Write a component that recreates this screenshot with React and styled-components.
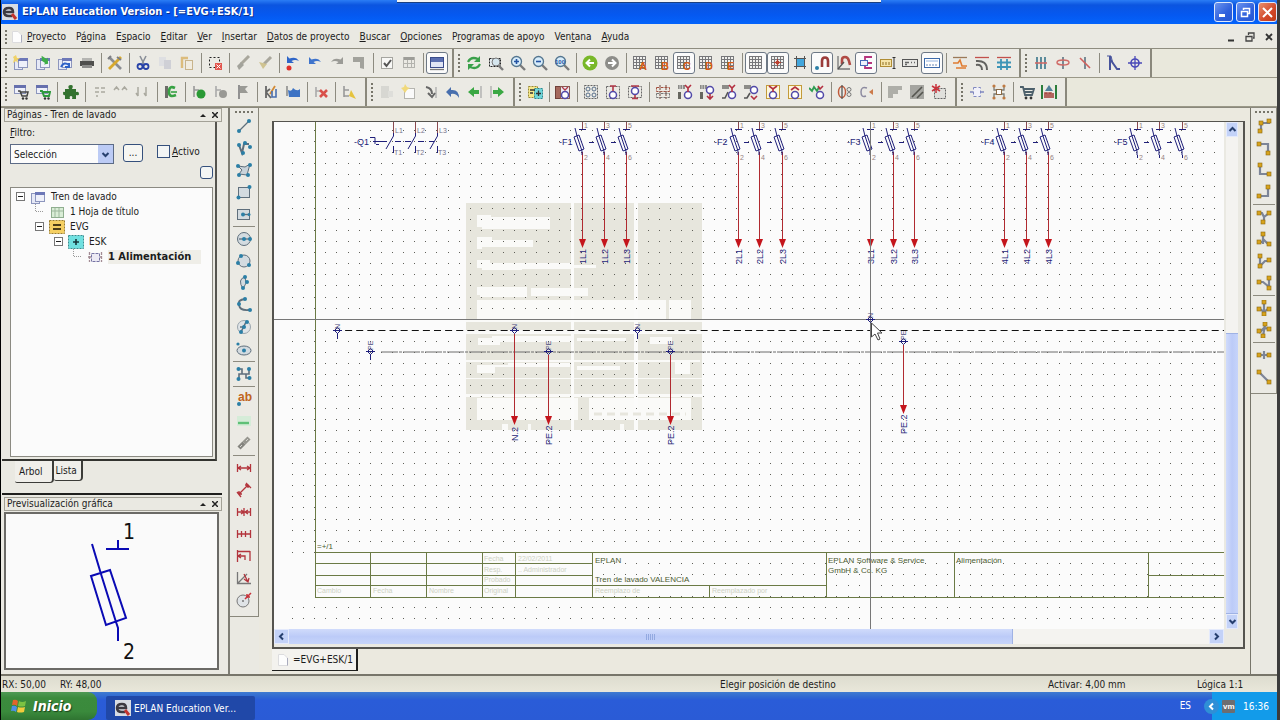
import React from "react";
import styled, { createGlobalStyle, css } from "styled-components";

const GlobalStyle = createGlobalStyle`
  * { box-sizing: border-box; }
  body {
    margin: 0;
    background: #eae9e2;
    font-family: "DejaVu Sans Condensed", "Noto Sans", sans-serif;
    font-size: 10px;
    color: #1c1c1c;
  }
  button, select, input { font: inherit; color: inherit; margin: 0; padding: 0; }
`;

/* ---------- frame ---------- */

const Desktop = styled.div`
  min-height: 100vh;
  display: flex;
  flex-direction: column;
  background: #eae9e2;
  border-left: 1px solid #000;
  border-right: 3px solid #3c3c3c;
  position: relative;
`;

const TopStrip = styled.div`
  position: absolute;
  top: 0;
  left: 31%;
  width: 38%;
  height: 3px;
  background: #f4f4f4;
  border-bottom: 1px solid #1b3f80;
`;

const TitleBar = styled.header`
  height: 24px;
  display: flex;
  align-items: center;
  gap: 4px;
  padding-left: 1px;
  background: linear-gradient(#2b7df5 0, #0b55e0 5px, #0558f0 60%, #0463fb 100%);
  color: #fff;
`;

const TitleText = styled.h1`
  flex: 1;
  margin: 0;
  font-family: "DejaVu Sans Condensed", sans-serif;
  font-size: 11px;
  font-weight: bold;
  line-height: 26px;
  text-shadow: 1px 1px 0 #0a2f8c;
`;

const WindowButtons = styled.div`
  display: flex;
  gap: 3px;
`;

const WindowButton = styled.button`
  width: 19px;
  height: 20px;
  border: 1px solid #dfe9fb;
  border-radius: 3px;
  display: grid;
  place-items: center;
  background: ${(p) => (p.$close ? "linear-gradient(135deg,#e78f6d,#d2482a 60%,#c23c18)" : "linear-gradient(135deg,#6b93ee,#2f60dc 60%,#2757d2)")};
`;

const MenuBar = styled.nav`
  height: 25px;
  display: flex;
  align-items: center;
  padding: 2px 0 0 4px;
  background: #eae9e2;
  border-bottom: 1px solid #8f8d80;
`;

const MenuLead = styled.span`
  display: flex;
  align-items: center;
  gap: 2px;
`;

const MenuItem = styled.button`
  padding: 0 5px;
  border: 0;
  background: none;
  line-height: 16px;
  white-space: nowrap;
`;

const MdiButtons = styled.div`
  margin-left: auto;
  display: flex;
  gap: 3px;
`;

const MdiButton = styled.button`
  width: 16px;
  height: 16px;
  border: 0;
  background: none;
  display: grid;
  place-items: center;
`;

/* ---------- toolbars ---------- */

const ToolRow = styled.div`
  height: 29px;
  display: flex;
  background: #e9e8dc;
  border-bottom: 1px solid #9a9888;
`;

const ToolGroup = styled.div`
  display: flex;
  align-items: center;
  padding: 0 ${(p) => p.$end}px 0 4px;
  background: #ebeae4;
  border-right: 2px solid #8a887c;
`;

const Grip = styled.span`
  flex: none;
  background-image: radial-gradient(circle at 1px 1px, #77756a 1px, transparent 1px);
  background-size: 4px 4px;
  ${(p) => (p.$across ? css`width: 18px; height: 4px; margin: 3px 0 0;` : css`width: 4px; height: ${p.$short ? 14 : 18}px; margin-right: 1px;`)}
`;

const ToolButton = styled.button`
  width: 22px;
  height: 22px;
  flex: none;
  display: grid;
  place-items: center;
  border: 1px solid ${(p) => (p.$on ? "#6d7885" : "transparent")};
  border-radius: 3px;
  background: ${(p) => (p.$on ? "#fbfbfb" : "none")};
`;

const Divider = styled.span`
  flex: none;
  background: #8d8b80;
  ${(p) => (p.$across ? css`width: 22px; height: 1px; margin: 1px 0;` : css`width: 1px; height: 20px; margin: 0 2px 0 3px;`)}
`;

const Rail = styled.div`
  flex: none;
  align-self: flex-start;
  width: ${(p) => p.$w}px;
  padding-bottom: 5px;
  display: flex;
  flex-direction: column;
  align-items: center;
  background: #ebeae4;
  border: solid #8a887c;
  border-width: 0 1px 1px 0;
`;

/* ---------- body ---------- */

const Body = styled.main`
  flex: 1;
  display: flex;
  border-top: 1px solid #8a887c;
  border-bottom: 2px solid #77756a;
`;

const SidePanel = styled.aside`
  flex: none;
  width: 229px;
  padding: 0 6px 4px 1px;
  display: flex;
  flex-direction: column;
  border-right: 2px solid #7e7d74;
`;

const PanelTitle = styled.h2`
  margin: 0 0 0 2px;
  height: 14px;
  padding: 0 3px 0 2px;
  display: flex;
  align-items: center;
  gap: 6px;
  border: 1px solid #a3a197;
  font-size: 10px;
  font-weight: normal;
  line-height: 12px;
`;

const PanelTitleText = styled.span`
  flex: 1;
`;

const PagesPanel = styled.section`
  flex: 1;
  display: flex;
  flex-direction: column;
  margin-right: 5px;
  padding: 4px 2px 2px 8px;
  border-right: 2px solid #55544f;
  border-bottom: 2px solid #33332f;
`;

const FieldLabel = styled.label`
  line-height: 14px;
`;

const FilterRow = styled.div`
  display: flex;
  align-items: flex-start;
  gap: 9px;
  margin-top: 4px;
`;

const SelectBox = styled.span`
  position: relative;
  width: 104px;
  height: 20px;
`;

const Select = styled.select`
  appearance: none;
  width: 100%;
  height: 100%;
  padding-left: 3px;
  border: 1px solid #5c6b86;
  border-radius: 0;
  background: #fcfcfc;
`;

const SelectArrow = styled.span`
  position: absolute;
  top: 1px;
  right: 1px;
  width: 15px;
  height: 18px;
  display: grid;
  place-items: center;
  background: #bccbf5;
  pointer-events: none;
`;

const DotsButton = styled.button`
  width: 20px;
  height: 18px;
  border: 1px solid #35507c;
  border-radius: 3px;
  background: #f6f6f2;
  line-height: 12px;
`;

const Check = styled.input`
  appearance: none;
  width: 13px;
  height: 13px;
  border: 1px solid #35507c;
  border-radius: ${(p) => (p.$round ? 3 : 0)}px;
  background: #f3f5f4;
`;

const CheckLabel = styled.label`
  display: flex;
  gap: 2px;
  margin: 1px 0 0 5px;
  line-height: 13px;
`;

const LoneCheck = styled.div`
  display: flex;
  justify-content: flex-end;
  margin: 2px 0 8px;
`;

const Tree = styled.ul`
  flex: 1;
  min-height: 120px;
  margin: 0;
  padding: 1px 0 0 5px;
  list-style: none;
  background: #fbfbfb;
  border: 1px solid #8b8a82;
`;

const TreeRow = styled.li`
  height: 15px;
  padding-left: ${(p) => p.$depth * 19}px;
  display: flex;
  align-items: center;
  gap: 5px;
`;

const TreeText = styled.span`
  padding-right: ${(p) => (p.$active ? 10 : 0)}px;
  font-size: ${(p) => (p.$active ? 11 : 10)}px;
  font-weight: ${(p) => (p.$active ? "bold" : "normal")};
  line-height: 14px;
  background: ${(p) => (p.$active ? "#efeee8" : "none")};
`;

const Tabs = styled.div`
  display: flex;
  align-items: flex-start;
  padding-left: 13px;
  margin-bottom: 10px;
`;

const Tab = styled.button`
  height: ${(p) => (p.$active ? 22 : 20)}px;
  padding: 0 ${(p) => (p.$active ? 9 : 4)}px 0 ${(p) => (p.$active ? 4 : 2)}px;
  border: solid #3c3c38;
  border-width: 0 2px 1px 0;
  border-radius: 0 0 4px 2px;
  background: #f0efea;
`;

const PreviewWrap = styled.section`
  border-top: 2px solid #1f1f1d;
  padding-top: 2px;
`;

const PreviewBox = styled.div`
  height: 158px;
  margin: 1px 3px 0 2px;
  border: 2px solid #6b6a66;
  background: #fafafa;
  display: flex;
  justify-content: center;
`;

/* ---------- editor ---------- */

const Editor = styled.section`
  flex: 1;
  min-width: 0;
  display: flex;
  flex-direction: column;
  padding: 13px 5px 2px 13px;
  background: #ebe9df;
  border-right: 1px solid #77756a;
`;

const Sheet = styled.div`
  flex: 1;
  min-height: 520px;
  display: grid;
  grid-template-columns: 1fr 14px;
  grid-template-rows: 1fr 15px;
  padding: 0 5px 3px 0;
  border: solid #55544f;
  border-width: 1px 2px 2px 2px;
  background: #eae9e2;
`;

const Drawing = styled.svg`
  display: block;
  width: 100%;
  height: 100%;
  min-height: 480px;
  background: #fbfbfb;
  font-family: "Liberation Sans", sans-serif;
`;

const ScrollBar = styled.div`
  display: flex;
  flex-direction: ${(p) => (p.$v ? "column" : "row")};
  ${(p) => (p.$v ? "margin-left: 2px;" : "")}
  background: #f4f3f0;
`;

const ScrollButton = styled.button`
  flex: none;
  width: ${(p) => (p.$v ? 12 : 15)}px;
  height: 15px;
  border: 1px solid #e4eafc;
  background: #c3d2f8;
  display: grid;
  place-items: center;
`;

const Thumb = styled.div`
  flex: ${(p) => p.$size};
  background: linear-gradient(${(p) => (p.$v ? "90deg" : "180deg")}, #d0dbfb, #bccbf8 50%, #c6d4fa);
  border: solid #9fb2e4;
  border-width: ${(p) => (p.$v ? "1px 0" : "0 1px 0 0")};
  display: grid;
  place-items: center;
`;

const Track = styled.div`
  flex: ${(p) => p.$size};
`;

const ThumbGrip = styled.span`
  width: 9px;
  height: 6px;
  background: repeating-linear-gradient(90deg, #93a9e0 0 1px, transparent 1px 2px);
`;

const SheetTabs = styled.div`
  display: flex;
  height: 23px;
`;

const SheetTab = styled.button`
  height: 22px;
  padding: 0 3px 0 6px;
  display: flex;
  align-items: center;
  gap: 5px;
  border: solid #1f1f1d;
  border-width: 0 2px 1px 0;
  background: #f3f2ee;
`;

const RightDock = styled.div`
  flex: none;
  width: 26px;
  background: #eae9e2;
`;

/* ---------- bottom bars ---------- */

const StatusBar = styled.footer`
  height: 16px;
  display: grid;
  grid-template-columns: 58px 1fr 328px 149px 80px;
  align-items: center;
  padding: 1px 0 0 1px;
  background: linear-gradient(#dddccf, #e9e7da);
  line-height: 14px;
  white-space: nowrap;
`;

const TaskBar = styled.div`
  height: 28px;
  display: flex;
  background: linear-gradient(#3f7bd0, #3068d2 5px, #2a5cd8 8px, #2a5bd6);
  color: #fff;
`;

const StartButton = styled.button`
  width: 96px;
  padding-left: 10px;
  border: 0;
  border-radius: 0 9px 9px 0;
  display: flex;
  align-items: center;
  gap: 6px;
  background: linear-gradient(#4f9a55, #3b8b3d 6px, #3a8a3c 70%, #2f7431);
  color: #fff;
  font-size: 14px;
  font-weight: bold;
  font-style: italic;
  text-shadow: 1px 1px 1px #1b431c;
`;

const TaskButton = styled.button`
  width: 149px;
  margin: 4px 0 0 9px;
  padding-left: 9px;
  border: 0;
  border-radius: 2px;
  display: flex;
  align-items: center;
  gap: 3px;
  background: #2048a8;
  color: #fff;
  white-space: nowrap;
`;

const Lang = styled.span`
  margin: 0 13px 0 auto;
  line-height: 28px;
`;

const Tray = styled.div`
  display: flex;
  align-items: center;
  gap: 3px;
  padding-right: 8px;
  background: linear-gradient(90deg, transparent 8px, #129bea 8px);
`;

const TrayButton = styled.button`
  width: 15px;
  height: 15px;
  border: 0;
  border-radius: 50%;
  background: #2f8fd6;
  display: grid;
  place-items: center;
`;

const Clock = styled.time`
  margin-left: 5px;
`;

/* ---------- icons ---------- */

const S = "#5f6f7c";
const N = "#2b7fa6";
const Dot = ({ x, y, c = N, r = 2 }) => <circle cx={x} cy={y} r={r} fill={c} />;
const P = ({ d, c = S, w = 1.3, f = "none", dash }) => (
  <path d={d} stroke={c} strokeWidth={w} fill={f} strokeDasharray={dash} />
);
const R = ({ x, y, w, h, c = "none", s = "none", dash }) => (
  <rect x={x} y={y} width={w} height={h} fill={c} stroke={s} strokeDasharray={dash} />
);
const T = ({ x, y, c, z = 9, children }) => (
  <text x={x} y={y} fill={c} fontSize={z} fontWeight="bold" fontFamily="Liberation Sans">{children}</text>
);
const page = (extra, c = "#6d78b8") => (
  <>
    <R x="1.5" y="4.5" w="8" h="10" c="#e6e9f6" s="#8d96bd" />
    <R x="5.5" y="3.5" w="9" h="9" c="#eef0fa" s="#8d96bd" />
    <R x="5" y="3" w="10" h="3" c={c} />
    {extra}
  </>
);
const grid = (extra, c = "#77777a") => (
  <>
    <R x="1.5" y="1.5" w="12" h="12" c="#f1f1ee" s={c} />
    <P d="M4.500 1V14M7.500 1V14M10.500 1V14M1 4.500H14M1 7.500H14M1 10.500H14" c={c} w="1" />
    {extra}
  </>
);
const letter = (ch) => <T x="7" y="15" c="#d85d14" z="11">{ch}</T>;
const lens = (extra) => (
  <>
    <P d="M10 10L15 15" c="#7b7b7b" w="2.4" />
    <circle cx="6.5" cy="6.5" r="5" fill="#d7ecfa" stroke="#54768f" strokeWidth="1.3" />
    {extra}
  </>
);
const potential = (extra, x = 9) => (
  <>
    <circle cx={x} cy="11" r="3.500" fill="#fff" stroke="#5149a8" strokeWidth="1.5" />
    {extra}
  </>
);
const squares = (
  <>
    <R x="1" y="1" w="7" h="4" c="#8c8c88" />
    <P d="M3 1V5M5.500 1V5" c="#ddd" w="0.800" />
    <R x="1" y="8" w="3" h="7" c="#66665f" />
  </>
);
const yellowNodes = (pts) => pts.map(([x, y], i) => (
  <rect key={i} x={x - 2} y={y - 2} width="4" height="4" fill="#d8a31c" stroke="#8a6a12" strokeWidth="0.6" />
));
const bends = (d, pts) => (<><P d={d} c="#7d8598" w="2.2" />{yellowNodes(pts)}</>);
const dim = (d) => <P d={d} c="#b3343c" w="1.3" />;

const icons = {
  newProject: page(<path d="M3 0L4 3L7 3L4.500 5L5 8L3 6L0 8L1 4L0 2Z" fill="#f0d268" />),
  openProject: page(<path d="M4 3H10V1L14 6L11 9V7H7Z" fill="#3fae49" transform="rotate(35 9 6)" />),
  linkProject: page(<P d="M4 12Q7 6 12 10M12 8V12H8" c="#2f62c8" w="2" />),
  print: <><R x="3" y="3" w="10" h="4" c="#b5b5b2" /><R x="1" y="6" w="14" h="5" c="#4f4f4d" /><R x="3" y="10" w="10" h="3" c="#8c8c8a" /></>,
  tools: <><P d="M2 2L14 14" c="#8b8d92" w="2.6" /><P d="M14 2L2 14" c="#d7a92f" w="2.8" /><P d="M1 4L4 1M10 2L14 5" c="#7d7f84" w="2" /></>,
  cut: <><P d="M5 1L9 9M11 1L7 9" c="#8a8f98" w="1.6" /><circle cx="5" cy="11.500" r="2.500" fill="none" stroke="#2742a8" strokeWidth="1.800" /><circle cx="11" cy="11.500" r="2.500" fill="none" stroke="#2742a8" strokeWidth="1.800" /></>,
  copy: <><R x="2" y="2" w="7" h="9" c="#dedfe2" /><R x="7" y="5" w="7" h="9" c="#cfd0d6" /></>,
  paste: <><P d="M3 13V3H9" c="#dcbc7c" w="2.400" /><R x="6.500" y="5.500" w="7" h="9" c="#f1ece0" s="#c8b48c" /></>,
  deleteSel: <><R x="2.500" y="2.500" w="10" h="10" s="#222" dash="2 2" /><R x="8" y="8" w="7" h="7" c="#e2564e" /><P d="M9.500 9.500L13.500 13.500M13.500 9.500L9.500 13.500" c="#fff" w="1" /></>,
  brush: <><P d="M14 1L6 9" c="#a9a79c" w="3" /><path d="M6 7L9 10L4 15L2 11Z" fill="#a3a39b" /></>,
  brushGold: <><P d="M14 2L7 9" c="#a9a79c" w="3" /><path d="M2 7L10 9L6 14Z" fill="#cfc391" /></>,
  undoDot: <><path d="M2 1V8H9L6.500 6Q10 4 14 6Q11 1 4.500 3.500Z" fill="#2f66c8" /><Dot x="4" y="13" c="#e0302a" r="2.500" /></>,
  undo: <path d="M2 2V9H9L6.500 7Q10 5 14 7Q11 2 4.500 4.500Z" fill="#3f74cc" />,
  redo: <path d="M14 2V9H7L9.500 7Q6 5 2 7Q5 2 11.500 4.500Z" fill="#9b9b96" />,
  redoList: <path d="M2 2H13V14L9 13V7H2Z" fill="#a2a29c" />,
  checkPage: <><R x="2.500" y="2.500" w="11" h="11" c="#f8f8f6" s="#a5a5a0" /><P d="M5 8L7.500 11L12 5" c="#555" w="2" /></>,
  table: <><R x="2" y="2" w="12" h="3" c="#9d9d98" /><P d="M2.500 2V13M6.500 5V13M10.500 5V13M13.500 2V13M2 8.500H14M2 12.500H14" c="#b3b3ae" w="1" /></>,
  windowIcon: <><R x="1.500" y="2.500" w="13" h="10" c="#dfe4f4" s="#3b4d8b" /><R x="2" y="3" w="12" h="4" c="#5b6fb0" /><P d="M1 14.500H15" c="#777" /></>,
  refresh: <><P d="M2 7Q5 1 12 4M14 9Q11 15 4 12" c="#3aa04a" w="2.200" /><path d="M14 1V7H8ZM2 15V9H8Z" fill="#3aa04a" /></>,
  zoomArea: <><R x="1.500" y="3.500" w="11" h="8" s="#222" dash="2 1" c="#e4edf2" /><P d="M10 10L15 15" c="#7b7b7b" w="2.400" /><circle cx="8" cy="7" r="4" fill="#d5e6ee" stroke="#777" /></>,
  zoomIn: lens(<P d="M6.500 4V9M4 6.500H9" c="#2353a3" w="1.600" />),
  zoomOut: lens(<P d="M4 6.500H9" c="#2353a3" w="1.600" />),
  zoomFull: lens(<T x="1" y="9" c="#2353a3" z="6">100</T>),
  back: <><circle cx="8" cy="8" r="7.500" fill="#79b829" /><P d="M12 8H5M8 4.500L4.500 8L8 11.500" c="#fff" w="2" /></>,
  forward: <><circle cx="8" cy="8" r="7" fill="#8d8d89" /><P d="M4 8H11M8 4.500L11.500 8L8 11.500" c="#fff" w="2" /></>,
  gridA: grid(letter("A")),
  gridB: grid(letter("B")),
  gridC: grid(letter("C")),
  gridD: grid(letter("D")),
  gridE: grid(letter("E")),
  grid: grid(null),
  gridSnap: grid(<><Dot x="7.500" y="7.500" c="#b84030" /><P d="M7.500 4V11M4 7.500H11" c="#b84030" w="1" /></>),
  align: <><R x="4.500" y="3.500" w="8" h="8" c="#43a7dd" s="#2a6a94" /><P d="M4.500 1V14M12.500 1V14M2 3.500H14M2 11.500H14" c="#555" w="1" /></>,
  magnet: <><P d="M8 12V6Q8 2.500 11 2.500Q14 2.500 14 6V12" c="#9b3c3a" w="2.600" /><Dot x="3" y="13" /></>,
  magnetAxis: <><P d="M2 1V14H14" c="#777" /><P d="M6 9V5Q6 2 9 2Q12 2 13 6L14 10" c="#b04a44" w="2.600" /><P d="M2 14L8 7" c="#555" /></>,
  snapLine: <><P d="M14 2H7V5M14 8H8M14 13H7V10" c="#b5347c" w="1.800" /><R x="2.500" y="5.500" w="7" h="5" c="#eef1fb" s="#4669b8" /></>,
  measure: <><R x="0.500" y="4.500" w="11" h="7" c="#f6e5a8" s="#b08d34" /><P d="M3 10V7M6 10V7M9 10V7" c="#8c6d22" w="1" /><P d="M14 2V14M12.500 2.500H15.500M12.500 13.500H15.500" c="#333" w="1" /></>,
  keyboard: <><R x="0.500" y="4.500" w="15" h="7" c="#e8e8e4" s="#555" /><P d="M3 7.500H7M9 7.500H10M12 7.500H13M3 9.500H5" c="#666" w="1.400" /></>,
  inputBox: <><R x="0.500" y="3.500" w="15" h="9" c="#fff" s="#3e6baa" /><R x="2" y="5" w="12" h="2" c="#c9d9ef" /><P d="M2 10H14" c="#6a87b5" w="1.200" dash="2 1" /></>,
  layerA: <><P d="M1 2.500H15" c="#9a7a5a" /><P d="M1 8H6L8 5L10 11H15M4 13H14" c="#e07d33" w="1.600" /></>,
  layerB: <><P d="M1 2.500H15" c="#c2504c" /><P d="M2 6Q13 5 13 15M2 10Q8 9 8 15" c="#62625f" w="2" /></>,
  layerC: <><P d="M1 2.500H15" c="#c2504c" /><P d="M5 4V15M11 4V15M1 7.500H15M1 12H15" c="#3e94b6" w="1.800" /></>,
  cross3: <><P d="M4 2V14M8 2V14M12 2V14" c="#4d8293" w="1.800" /><P d="M2 8H14" c="#d06a66" w="1.600" /></>,
  ring: <><P d="M8 2V14" c="#5d7380" w="1.600" /><ellipse cx="8" cy="7.500" rx="6" ry="2.500" fill="none" stroke="#d06a66" strokeWidth="1.400" /></>,
  crossDiag: <><P d="M8 2V14" c="#5d7380" w="1.600" /><P d="M3 3L13 13" c="#d0605c" w="1.600" /></>,
  jumpDown: <><P d="M5 1V15M5 4L12 14H15" c="#47539c" w="2" /><P d="M2 1H6L8 9" c="#47539c" w="1" /></>,
  potentialDef: <><circle cx="8" cy="8" r="4" fill="none" stroke="#4a49b8" strokeWidth="1.600" /><P d="M8 1V15M1 8H15" c="#4a49b8" w="1.300" /></>,
  cartPage: <><R x="1.500" y="1.500" w="11" h="8" c="#eef0fa" s="#8d96bd" /><R x="1" y="1" w="12" h="3" c="#6670ad" /><P d="M5 7H7L9 12H14L15 8H8" c="#444" w="1.500" /><Dot x="10" y="14.500" c="#333" r="1.200" /><Dot x="13.500" y="14.500" c="#333" r="1.200" /></>,
  cartPageGo: <><R x="1.500" y="1.500" w="11" h="8" c="#eef0fa" s="#8d96bd" /><R x="1" y="1" w="12" h="3" c="#6670ad" /><P d="M5 7H7L9 12H14L15 8H8" c="#2f9a3e" w="2" /><Dot x="10" y="14.500" c="#333" r="1.200" /><Dot x="13.500" y="14.500" c="#333" r="1.200" /></>,
  puzzle: <path d="M2 5H6Q4 1 8 1Q11 1 9 5H13V8Q16 7 16 10Q16 12 13 11V15H9Q10 12 8 12Q6 12 7 15H2V11Q0 12 0 9Q0 7 2 8Z" fill="#33722f" />,
  listGray: <P d="M4 4H8M10 4H14M4 8H8M10 8H14M5 12H7" c="#aaa99f" />,
  caretsUp: <P d="M1 6L3.500 3L6 6M9 6L11.500 3L14 6" c="#aaa99f" w="1.500" />,
  caretsDown: <P d="M3 3V12M1 9L3 12M11 3V12M9 9L11 12" c="#aaa99f" w="1.500" />,
  sync: <><R x="2" y="2" w="3" h="12" c="#6c6c68" /><P d="M12 4Q6 1 6 8Q6 14 13 11" c="#37a243" w="2.600" /><P d="M8 8H14" c="#37a243" w="1.600" /></>,
  treeGreen: <><P d="M3 2V13M3 6H8" c="#999" w="1.600" /><Dot x="10" y="10" c="#2a9a35" r="4.500" /></>,
  treeGray: <><P d="M3 2V13M3 6H8" c="#aaa" w="1.600" /><Dot x="10" y="10" c="#999995" r="4" /></>,
  flagGray: <><P d="M4 1V15" c="#888" w="1.800" /><path d="M5 2H13L10 5L13 9H5Z" fill="#9a9a95" /></>,
  editBlue: <><P d="M3 2V14M3 8L7 5M3 8L8 14" c="#666" w="1.800" /><P d="M12 2L7 10" c="#d18a35" w="1.800" /><P d="M9 7V13H13V5" c="#4a6fb0" w="1.600" /></>,
  shield: <><path d="M3 6Q7 8 8 4Q12 8 15 5V13H4Z" fill="#3d73c4" /><P d="M2 2V12" c="#777" /></>,
  removeRed: <><P d="M3 3V13M3 7H7" c="#aaa" w="1.600" /><P d="M7 6L14 13M14 6L7 13" c="#d9504a" w="2.600" /></>,
  treeStar: <><P d="M3 2V13M3 6H8M3 12H8" c="#999" w="1.600" /><path d="M10 6L15 15L8 12Z" fill="#e5c33e" /></>,
  ghost: <><R x="2" y="2" w="8" h="12" c="#d7d7d2" /><R x="9" y="7" w="5" h="6" c="#dededa" /></>,
  newPage: <><R x="3.500" y="4.500" w="10" h="10" c="#fafafa" s="#b5b5b0" /><path d="M4 0L6 3L9 4L6 6L4 9L2 6L0 4L3 3Z" fill="#f1d97a" /></>,
  pageDown: <><P d="M13 3V14" c="#aaa" /><P d="M3 3Q9 4 9 10M5 9L9 13L12 9" c="#666" w="2" /></>,
  turn: <path d="M1 8L6 3V6Q14 5 14 14Q11 9 6 10V13Z" fill="#486fae" />,
  prev: <><path d="M1 8L7 3V6H12V10H7V13Z" fill="#3aa843" /><P d="M14 2V14" c="#aaa" /></>,
  next: <><path d="M15 8L9 3V6H4V10H9V13Z" fill="#3aa843" /><P d="M2 2V14" c="#aaa" /></>,
  structure: <><R x="1.500" y="2.500" w="9" h="11" c="#f7e889" s="#9a8a34" dash="2 1" /><R x="7.500" y="4.500" w="8" h="10" c="#6fd6da" s="#2d8a91" dash="2 1" /><P d="M11.500 6.500V12M9 9.500H14M3 6H8M3 9H6" c="#333" /></>,
  cabinet: <><R x="0.500" y="2.500" w="5" h="12" c="#a5685c" s="#70413a" /><R x="5.500" y="2.500" w="9" h="12" c="#ececf4" s="#8a5a52" />{potential(<P d="M7 3L10 6L13 3" c="#b13a4a" />, 10)}</>,
  nodesGray: <><R x="1.500" y="1.500" w="13" h="13" s="#666" dash="2 1" />{[[5, 5], [11, 5], [5, 11], [11, 11]].map(([x, y]) => <circle key={x + "-" + y} cx={x} cy={y} r="2" fill="none" stroke="#566d88" />)}</>,
  boxPotA: <><R x="1.500" y="2.500" w="13" h="12" s="#666" dash="2 1" />{potential(<P d="M5 2H11M8 2V7" c="#b13a4a" w="1.600" />, 8)}</>,
  boxPotB: <><R x="1.500" y="2.500" w="13" h="11" s="#666" dash="2 1" /><circle cx="8" cy="7" r="3.500" fill="#fff" stroke="#5149a8" strokeWidth="1.500" /><P d="M4 2H12M8 11V15M5 14.500H11" c="#b13a4a" w="1.600" /></>,
  chipRed: <><R x="1.500" y="3.500" w="13" h="4" s="#a3503e" dash="3 1" /><R x="1.500" y="9.500" w="13" h="4" s="#777" dash="3 1" /><P d="M5 1V15M11 1V15" c="#8d6a60" dash="2 1" /></>,
  potA: <>{squares}{potential(<P d="M8 1L11 4L14 1M11 4V8" c="#b32f40" w="1.600" />, 11)}</>,
  potB: <>{squares}<circle cx="11" cy="6" r="3.500" fill="#fff" stroke="#5149a8" strokeWidth="1.500" /><P d="M11 10V14M8 12L11 15L14 12" c="#b32f40" w="1.600" /></>,
  potC: <><R x="1" y="1" w="7" h="4" c="#8c8c88" />{potential(<><P d="M8 1L11 4L14 1M11 4V8" c="#b32f40" w="1.600" /><P d="M1 14H4L7 8" c="#555" w="1.600" /></>, 11)}</>,
  potD: <><R x="1" y="1" w="7" h="4" c="#8c8c88" /><circle cx="11" cy="6" r="3.500" fill="#fff" stroke="#5149a8" strokeWidth="1.500" /><P d="M8 12L11 15L14 12" c="#b32f40" w="1.600" /><P d="M1 14H4L7 9" c="#555" w="1.600" /></>,
  potBoxDown: <><R x="1.500" y="1.500" w="13" h="13" c="#fdf7dc" s="#c39a3a" />{potential(<P d="M4 2L8 5L12 2M8 5V8" c="#b32f40" w="1.600" />, 8)}</>,
  potBoxUp: <><R x="1.500" y="1.500" w="13" h="13" c="#fdf7dc" s="#c39a3a" />{potential(<P d="M4 6L8 3L12 6" c="#b32f40" w="1.600" />, 8)}</>,
  potGreen: <><P d="M0 4L3 7L5 3L8 7L10 3" c="#2e9c52" w="1.800" />{potential(<P d="M9 2L11 5L14 2" c="#b32f40" w="1.600" />, 11)}</>,
  plugs: <><ellipse cx="5" cy="8" rx="3.500" ry="5.500" fill="none" stroke="#c05a3a" strokeWidth="1.500" /><P d="M5 1V15" c="#555" /><circle cx="12" cy="5.500" r="2" fill="none" stroke="#777" /><circle cx="12" cy="10.500" r="2" fill="none" stroke="#777" /></>,
  plugIn: <><path d="M8 4Q2 2 2 8Q2 14 7 12" fill="none" stroke="#8d8ba0" strokeWidth="1.500" /><path d="M10 8L14 5V11Z" fill="#cc7a4a" /></>,
  stair: <path d="M1 2H15V6H11V10H6V14H1Z" fill="#aeaea8" />,
  hatch: <><R x="1" y="1" w="14" h="14" c="#a5a5a0" /><P d="M3 13L13 3M8 14L14 8" c="#55554f" w="1.600" /></>,
  boxStar: <><R x="3.500" y="4.500" w="11" h="10" s="#666" dash="2 1" c="#e0e0dc" /><P d="M5 0V9M1 2L9 7M9 2L1 7" c="#c8323a" w="1.500" /></>,
  chipBlue: <><R x="4.500" y="3.500" w="7" h="9" c="#f1f1fa" s="#8088c0" dash="3 2" /><P d="M1 8H4M12 8H15" c="#8088c0" /></>,
  network: <><P d="M3 2.500V6H6M13 2.500V6H10M3 13.500V10H6M13 13.500V10H10" c="#7c7c76" w="1.300" /><R x="5.500" y="5.500" w="5" h="5" c="#fff" s="#8c6a44" />{[[3, 2], [13, 2], [3, 14], [13, 14]].map(([x, y]) => <Dot key={x + "_" + y} x={x} y={y} c="#bf7b43" r={1.600} />)}</>,
  cart: <><P d="M1 3H4L6 11H13L15 5H5" c="#4d606c" w="1.800" /><P d="M6 8H14" c="#4d606c" w="2" /><Dot x="7" y="14" c="#333" r="1.400" /><Dot x="12" y="14" c="#333" r="1.400" /></>,
  bars: <><R x="0" y="1" w="2" h="14" c="#2c7d3b" /><R x="14" y="1" w="2" h="14" c="#2c7d3b" /><P d="M4 14V9H6V14M8 14V9H10V14M12 14V9" c="#a5443c" w="1.600" /><path d="M8 1L12 7H4Z" fill="#51809a" /></>,
  line: <><P d="M3 13L13 3" /><Dot x="3" y="13" /><Dot x="13" y="3" /></>,
  polyline: <><P d="M3 5L6 13L8 4L13 4" w="2" /><Dot x="3" y="5" /><Dot x="7" y="13" /><Dot x="9" y="3" /><Dot x="14" y="7" /></>,
  polygon: <><path d="M2 4L9 5L14 2L11 13L3 12L6 8Z" fill="#c9d3da" stroke={S} /><Dot x="2" y="4" /><Dot x="14" y="3" /><Dot x="3" y="13" /><Dot x="12" y="13" /></>,
  rect: <><R x="2.500" y="3.500" w="11" h="10" c="#d3dbe0" s={S} /><Dot x="2.500" y="13.500" /><Dot x="13.500" y="3" /></>,
  rectCenter: <><R x="1.500" y="3.500" w="12" h="10" c="#d3dbe0" s={S} /><P d="M6 8.500H13" /><Dot x="7" y="8.500" /><Dot x="13" y="8.500" r="1.500" /></>,
  circle: <><circle cx="8" cy="8" r="6.500" fill="#d3dbe0" stroke={S} /><P d="M3 8H14" /><Dot x="8" y="8" /><Dot x="14" y="8" /></>,
  circle3: <><circle cx="8" cy="8" r="6" fill="#d3dbe0" stroke={S} /><Dot x="5" y="3" /><Dot x="2" y="10" /><Dot x="13" y="12" /></>,
  arc: <><path d="M9 2Q1 4 7 14L10 8Z" fill="#d3dbe0" stroke={S} /><Dot x="9" y="2" /><Dot x="7" y="13" /><Dot x="11" y="7" /></>,
  arc3: <><P d="M9 2Q1 3 3 8Q4 14 13 13" w="1.800" /><Dot x="9" y="2" /><Dot x="3" y="7" /><Dot x="14" y="13" /></>,
  sector: <><circle cx="8" cy="8" r="6.500" fill="#dfe4e7" stroke="#9aa5ad" /><P d="M5 13L10 3M4 8L8 8" w="1.600" /><Dot x="5" y="13" /><Dot x="8" y="8" /><Dot x="11" y="3" /></>,
  ellipse: <><ellipse cx="8" cy="9.500" rx="7" ry="4.500" fill="#d3dbe0" stroke={S} /><Dot x="8" y="9.500" /><Dot x="2" y="3" r="1.600" /></>,
  spline: <><P d="M3 13V8H13V3M13 12H10V8M3 3H6V8" w="1.600" /><Dot x="2.500" y="3" /><Dot x="2.500" y="13" /><Dot x="13" y="3" /><Dot x="13.500" y="12" /></>,
  text: <><T x="2" y="10" c="#bf6420" z="12">ab</T><Dot x="3" y="13" /></>,
  image: <><R x="1" y="3" w="14" h="10" c="#d5ecd8" /><P d="M2 10H13" c="#5fc077" w="2.400" /></>,
  link: <><P d="M3 13L8 8" c="#85857f" w="4.500" /><P d="M8 8L13 3" c="#96968f" w="4.500" /><P d="M4 12L6 10M10 6L12 4" c="#d8d8d4" w="1" /></>,
  dimH: dim("M1.500 4V12M14.500 4V12M2 8H14M5 6L2 8L5 10M11 6L14 8L11 10"),
  dimDiag: dim("M3 12L12 3M9 3L12 3L12 6M3 9V12H6M1 10L5 15M10 1L15 6"),
  dimChain: dim("M1.500 4V12M8 4V12M14.500 4V12M2 8H14M5 6L8 8L5 10M9 8L12 6M12 10L9 8"),
  dimInc: dim("M1.500 4V12M5.500 5V11M9.500 5V11M14.500 4V12M2 8H14"),
  dimBase: <>{dim("M2 3.500H14M14 3V13M1.500 2V14M2 8H9V12M5 6L2 8L5 10")}</>,
  dimAngle: <><P d="M1.500 2V13.500H15M2 13L11 4" c="#777" /><P d="M8 4L12 12M8 9L12 12L13 8" c="#b3343c" /></>,
  dimRadius: <><circle cx="7" cy="9" r="6" fill="#dfe3e6" stroke="#777" /><Dot x="7" y="9" c="#777" r="1" /><P d="M9 7L15 1M11 2V5H14" c="#c8323a" w="1.500" /></>,
  b1: bends("M5 14V5H14", [[4, 13], [13, 3], [5, 5]]),
  b2: bends("M2 4H12V13", [[3, 4], [12, 13]]),
  b3: bends("M4 3V12H13", [[4, 3], [13, 12]]),
  b4: bends("M12 3V12H3", [[12, 3], [3, 12]]),
  t1: bends("M2 4H6L8 8L13 4M8 8V13", [[3, 4], [13, 4], [7, 13]]),
  t2: bends("M7 3V13M7 8L12 13M3 11H7", [[7, 3], [3, 11], [13, 13]]),
  t3: bends("M4 3V13L9 8H13", [[4, 3], [4, 13], [13, 7]]),
  t4: bends("M13 3V13M3 7H7L12 11", [[13, 3], [13, 13], [3, 7]]),
  c1: bends("M8 3V14M3 8L8 12L13 8", [[8, 2], [3, 9], [13, 9], [8, 14]]),
  c2: bends("M9 3L7 14M3 11L8 6L14 7", [[9, 2], [3, 9], [13, 7], [7, 14]]),
  d1: bends("M2 8H14M8 4V12", [[3, 8], [13, 8]]),
  d2: bends("M3 3L13 13", [[3, 3], [13, 13]]),
};

const Icon = ({ name }) => (
  <svg width="16" height="16" viewBox="0 0 16 16" aria-hidden="true">{icons[name]}</svg>
);

const Tools = ({ list, across }) =>
  list.split(" ").map((item, i) => {
    if (item === "|") return <Divider key={i} $across={across} />;
    const on = item.endsWith("*");
    const name = on ? item.slice(0, -1) : item;
    return (
      <ToolButton key={i} type="button" aria-label={name} aria-pressed={on} $on={on}>
        <Icon name={name} />
      </ToolButton>
    );
  });

const toolRows = [
  { end: 4, groups: [
    "newProject openProject linkProject print | tools | cut copy paste | deleteSel | brush brushGold | undoDot undo redo redoList | checkPage table | windowIcon*",
    "refresh zoomArea zoomIn zoomOut zoomFull | back forward | gridA gridB gridC* gridD gridE | grid* gridSnap* align magnet* magnetAxis snapLine* measure keyboard inputBox* | layerA layerB layerC",
    "cross3 ring crossDiag | jumpDown potentialDef",
  ] },
  { end: 5, groups: [
    "cartPage cartPageGo | puzzle | listGray caretsUp caretsDown | sync | treeGreen treeGray flagGray | editBlue shield | removeRed | treeStar",
    "ghost newPage pageDown turn prev next",
    "structure | cabinet | nodesGray boxPotA boxPotB | chipRed potA potB potC potD potBoxDown potBoxUp potGreen | plugs plugIn | stair hatch boxStar",
    "chipBlue network | cart bars",
  ] },
];

const drawTools = "line polyline polygon rect rectCenter | circle circle3 arc arc3 sector ellipse | spline | text image link | dimH dimDiag dimChain dimInc dimBase dimAngle dimRadius";
const connectTools = "b1 b2 b3 b4 | t1 t2 t3 t4 | c1 c2 | d1 d2";

/* [text, index of the access key] */
const menus = [["Proyecto", 0], ["Página", 1], ["Espacio", 1], ["Editar", 0], ["Ver", 0], ["Insertar", 0], ["Datos de proyecto", 0], ["Buscar", 0], ["Opciones", 0], ["Programas de apoyo", 1], ["Ventana", 3], ["Ayuda", 0]];

const Key = ({ text, at }) => (
  <>{text.slice(0, at)}<u>{text[at]}</u>{text.slice(at + 1)}</>
);

const AppIcon = () => (
  <svg width="16" height="16" viewBox="0 0 16 16" aria-hidden="true">
    <rect width="16" height="16" fill="#d8dce4" />
    <path d="M2 8H11Q11 4 7 4Q2 4 2 8Q2 12 7 12H10" fill="none" stroke="#3d3a42" strokeWidth="2.500" />
    <path d="M10 10L14 15" stroke="#c3342e" strokeWidth="3" />
  </svg>
);

const Chevron = ({ dir, c = "#27406f" }) => (
  <svg width="9" height="9" viewBox="0 0 9 9" aria-hidden="true">
    <path d="M1.500 3L4.500 6L7.500 3" fill="none" stroke={c} strokeWidth="2" transform={`rotate(${dir} 4.500 4.500)`} />
  </svg>
);

const PanelHeader = ({ children }) => (
  <PanelTitle>
    <PanelTitleText>{children}</PanelTitleText>
    <svg width="6" height="6" viewBox="0 0 6 6" aria-hidden="true"><path d="M0 5L3 2L6 5Z" fill="#222" /></svg>
    <svg width="6" height="6" viewBox="0 0 6 6" aria-hidden="true"><path d="M0 0L6 6M6 0L0 6" stroke="#222" strokeWidth="1.500" /></svg>
  </PanelTitle>
);

/* ---------- tree ---------- */

const Expander = () => (
  <svg width="9" height="9" viewBox="0 0 9 9" aria-hidden="true">
    <rect x="0.500" y="0.500" width="8" height="8" fill="#fff" stroke="#777" />
    <path d="M2 4.500H7" stroke="#222" />
  </svg>
);
const Elbow = () => (
  <svg width="9" height="15" viewBox="0 0 9 15" aria-hidden="true">
    <path d="M0.500 0V7.500H9" fill="none" stroke="#999" strokeDasharray="1 1" />
  </svg>
);
const treeArt = {
  project: page(null),
  title: <><R x="2.500" y="3.500" w="12" h="10" c="#d9edd6" s="#8fae8f" /><P d="M6 4V13M10 4V13M3 7H14" c="#9db79d" w="1" /></>,
  plant: <><R x="0.500" y="1.500" w="15" h="13" c="#f5cf62" s="#9c7d2b" dash="2 1" /><P d="M4 6H12M4 10H12" c="#4c3d17" w="2" /></>,
  place: <><R x="0.500" y="1.500" w="15" h="13" c="#70e0e0" s="#388f92" dash="2 1" /><P d="M8 5V11M5 8H11" c="#16363a" w="1.600" /></>,
  scheme: <><R x="4.500" y="4.500" w="8" h="8" c="#eceaf4" s="#7674a4" dash="3 1" /><P d="M2.500 3V13M1 8H4M13 8H15M14.500 3V13" c="#a38c94" dash="3 1" /></>,
};
const treeRows = [
  { depth: 0, open: true, art: "project", text: "Tren de lavado" },
  { depth: 1, art: "title", text: "1 Hoja de título" },
  { depth: 1, open: true, art: "plant", text: "EVG" },
  { depth: 2, open: true, art: "place", text: "ESK" },
  { depth: 3, art: "scheme", text: "1 Alimentación", active: true },
];

/* ---------- schematic ---------- */

const BLUE = "#1f1f7a";
const OLIVE = "#6b7a45";
const RED = "#c4151c";

const gridPath = (() => {
  let d = "";
  for (let r = 0; r < 45; r += 1)
    for (let c = 0; c < 84; c += 1) {
      const x = Math.round(292 + c * 11.11);
      const y = Math.round(130 + r * 11.1);
      if (y > 552 && y < 597 && x < 592) continue;
      d += `M${x} ${y}h1v1h-1z`;
    }
  return d;
})();

const VLabel = ({ x, y, size = 9, color = BLUE, children }) => (
  <text transform={`translate(${x} ${y}) rotate(-90)`} fontSize={size} fill={color}>{children}</text>
);

const Arrow = ({ x, from, y, label, end }) => (
  <>
    <path d={`M${x + 0.5} ${from}V${y}`} stroke="#b02a30" />
    <path d={`M${x - 3} ${y}H${x + 4}L${x + 0.5} ${y + 9}Z`} fill={RED} />
    <VLabel x={x + 4} y={end}>{label}</VLabel>
  </>
);

const Fuse = ({ x, n, wired, first }) => (
  <g fill="none" stroke={BLUE}>
    <path d={`M${x + 0.5} 122V129`} stroke="#8a4a50" />
    <path d={`M${x - 3} 129.500H${x + 4}M${x - 7} 128L${x - 5} 136M${x - 8} 137L${x - 3} 135L${x + 2} 149L${x - 3} 151ZM${x - 5} 136L${x} 151V155`} />
    {!first && <path d={`M${x - 15} 142.500H${x - 10}`} />}
    <g stroke="none" fill="#96817f" fontSize="7">
      <text x={x + 2} y="128">{n}</text>
      <text x={x + 2} y="160">{n + 1}</text>
    </g>
    {wired && <path d={`M${x + 0.5} 155V158`} />}
  </g>
);

const banks = [
  { id: 1, label: 559, xs: [582, 604, 626] },
  { id: 2, label: 714, xs: [738, 759, 782] },
  { id: 3, label: 847, xs: [870, 893, 914] },
  { id: 4, label: 981, xs: [1004, 1026, 1048] },
  { id: 5, label: 1114, xs: [1137, 1159, 1182], open: true },
];

const Node = ({ x, y, label, stub }) => (
  <g fill="none" stroke={BLUE}>
    <path d={`M${x - 4} ${y + 0.5}H${x + 5}M${x + 0.5} ${y - 2.5}L${x + 3.5} ${y + 0.5}L${x + 0.5} ${y + 3.5}L${x - 2.5} ${y + 0.5}Z`} />
    {stub && <path d={`M${x + 0.5} ${y + 3}V${y + 9}`} />}
    <g stroke="none"><VLabel x={x + 3} y={y - 1} size={7} color="#4b4b80">{label}</VLabel></g>
  </g>
);

const Cells = ({ items }) => items.map(([x, y, t], i) => <text key={i} x={x} y={y}>{t}</text>);

const Schematic = () => (
  <Drawing role="img" aria-label="Alimentación">
    <g transform="translate(-274 -122)">
      <g>
        <path d="M466 203H702V430H466Z" fill="#e7e6dd" />
        <path fill="#fafaf8" d="M477 215H491V217H550V229H482V227H477ZM477 237H492V240H533V247H482V249H477ZM477 260H490V263H571V269H522V270H482V268H477ZM573 265H596V268H573ZM477 287H527V297H480V295H477ZM531 288H588V296H531ZM477 300H666V319H477ZM669 300H691V319H669ZM466 319H702V322H466ZM466 330H702V334H466ZM478 338H492V336H573V342H500V345H478ZM577 338H626V341H577ZM650 337H672V344H650ZM466 360H700V362H466ZM477 365H508V363H570V367H495V373H477ZM577 366H620V370H577ZM675 360H690V374H675ZM466 378H702V379H466ZM466 394H702V397H466ZM477 398H578V420H477ZM589 398H691V420H589ZM502 424H508V430H502ZM528 424H531V430H528ZM620 424H624V430H620Z" />
        <path fill="#fbfbfa" d="M571 203H574V430H571ZM634 203H638V430H634Z" />
        <path d="M594 414H686" stroke="#e7e6dd" strokeWidth="3" strokeDasharray="8 5" />
      </g>
      <path d={gridPath} fill="#5f5f58" shapeRendering="crispEdges" />

      <path d="M315.500 122V597M315 552.500H2400M315 563.500H592M315 575.500H592M315 585.500H826M315 597.500H2400M370.500 552V597M426.500 552V597M482.500 552V597M515.500 552V597M592.500 552V597M709.500 585V597M826.500 552V597M954.500 552V597M1148.500 552V597M1148 575.500H2400" fill="none" stroke={OLIVE} />
      <g fontSize="8" fill="#4c5b32">
        <Cells items={[[317, 549, "=+/1"], [595, 563, "EPLAN"], [595, 582, "Tren de lavado VALENCIA"], [828, 563, "EPLAN Software & Service"], [828, 573, "GmbH & Co. KG"], [956, 563, "Alimentación"]]} />
      </g>
      <g fontSize="7" fill="#cdd1c3">
        <Cells items={[[484, 561, "Fecha"], [484, 572, "Resp."], [484, 582, "Probado"], [484, 593, "Original"], [518, 561, "22/02/2011"], [518, 572, ".. Administrador"], [317, 593, "Cambio"], [373, 593, "Fecha"], [429, 593, "Nombre"], [595, 593, "Reemplazo de"], [712, 593, "Reemplazado por"]]} />
      </g>

      <path d="M337 330.500H2400" stroke="#111" strokeDasharray="7 4.110" strokeDashoffset="3" />
      <path d="M381 352H2400" stroke="#6d6d6d" strokeDasharray="17 1 3 1" />

      <g fill="none" stroke={BLUE}>
        {[393, 415, 437].map((x) => (
          <g key={x}>
            <path d={`M${x + 0.5} 122V133`} stroke="#8a4a50" />
            <path d={`M${x + 0.5} 133V136L${x - 7} 149M${x + 0.5} 146V153`} />
          </g>
        ))}
        <path d="M370 137.500H375V144M373 141.500H387M395 141.500H401M405 141.500H411M418 141.500H424M429 141.500H434M376 144.500H379" />
      </g>
      <g fontSize="7" fill="#77738c">
        {[393, 415, 437].map((x, i) => (
          <g key={x}><text x={x + 2} y="133">L{i + 1}</text><text x={x + 1} y="155">T{i + 1}</text></g>
        ))}
      </g>
      <text x="354" y="145" fontSize="9" fill={BLUE}>-Q1</text>

      {banks.map((b) => (
        <g key={b.id}>
          <text x={b.label} y="145" fontSize="9" fill={BLUE}>-F{b.id}</text>
          {b.xs.map((x, i) => (
            <g key={x}>
              {!b.open && <Arrow x={x} from={152} y={239} label={`${b.id}L${i + 1}`} end={264} />}
              <Fuse x={x} n={i * 2 + 1} wired={b.open} first={i === 0} />
            </g>
          ))}
        </g>
      ))}

      <Arrow x={514} from={334} y={416} label="N.2" end={441} />
      <Arrow x={548} from={355} y={416} label="PE.2" end={445} />
      <Arrow x={670} from={355} y={416} label="PE.2" end={445} />
      <Arrow x={903} from={345} y={405} label="PE.2" end={434} />
      <Node x={337} y={330} label="N" stub />
      <Node x={514} y={330} label="N" />
      <Node x={637} y={330} label="N" stub />
      <Node x={370} y={351} label="PE" stub />
      <Node x={548} y={351} label="PE" />
      <Node x={670} y={351} label="PE" />
      <Node x={903} y={341} label="PE" />

      <path d="M274 319.500H2400M870.500 122V1400" stroke="#777" />
      <Node x={870} y={319} label="N" />
      <path d="M871.500 323V337L875 334L878 340L880 339L877.500 333H882Z" fill="#fff" stroke="#444" />
    </g>
  </Drawing>
);

const FusePreview = () => (
  <svg width="206" height="154" viewBox="9 515 206 154" role="img" aria-label="Fusible">
    <path d="M92 545L101 575L116 623L118 629V642M91 577L110 571L126 619L106 626ZM106 550H129M118 541V550" fill="none" stroke="#0a0ab4" strokeWidth="2" />
    <g fontFamily="DejaVu Sans Condensed" fontSize="21" fill="#111">
      <text x="123" y="540">1</text>
      <text x="123" y="660">2</text>
    </g>
  </svg>
);

const PageGlyph = () => (
  <svg width="10" height="12" viewBox="0 0 10 12" aria-hidden="true">
    <path d="M0.500 0.500H6L9.500 4V11.500H0.500Z" fill="#fdfdfd" stroke="#dcdcde" />
    <path d="M9.500 4V11.500" stroke="#a9abbd" />
  </svg>
);

export default function App() {
  return (
    <>
      <GlobalStyle />
      <Desktop>
        <TitleBar>
          <AppIcon />
          <TitleText>EPLAN Education Version - [=EVG+ESK/1]</TitleText>
          <WindowButtons>
            <WindowButton type="button" aria-label="Minimizar">
              <svg width="11" height="11"><path d="M1 8.500H7" stroke="#fff" strokeWidth="3" /></svg>
            </WindowButton>
            <WindowButton type="button" aria-label="Restaurar">
              <svg width="11" height="11"><path d="M3.500 3V1.500H9.500V6.500H8M1.500 4.500H7.500V9.500H1.500Z" fill="none" stroke="#fff" strokeWidth="1.500" /></svg>
            </WindowButton>
            <WindowButton type="button" aria-label="Cerrar" $close>
              <svg width="11" height="11"><path d="M1 1L10 10M10 1L1 10" stroke="#fff" strokeWidth="2" /></svg>
            </WindowButton>
          </WindowButtons>
        </TitleBar>

        <MenuBar>
          <MenuLead><Grip $short /><PageGlyph /></MenuLead>
          {menus.map(([text, at]) => (
            <MenuItem key={text} type="button"><Key text={text} at={at} /></MenuItem>
          ))}
          <MdiButtons>
            <MdiButton type="button" aria-label="Minimizar documento">
              <svg width="10" height="10"><path d="M2 8.500H8" stroke="#333" strokeWidth="2" /></svg>
            </MdiButton>
            <MdiButton type="button" aria-label="Restaurar documento">
              <svg width="10" height="10"><path d="M3.500 3V1H9V6H8M1 4.500H7V9H1Z" fill="none" stroke="#444" strokeWidth="1.300" /></svg>
            </MdiButton>
            <MdiButton type="button" aria-label="Cerrar documento">
              <svg width="10" height="10"><path d="M2 2L8 8M8 2L2 8" stroke="#333" strokeWidth="1.800" /></svg>
            </MdiButton>
          </MdiButtons>
        </MenuBar>

        {toolRows.map((row, r) => (
          <ToolRow key={r}>
            {row.groups.map((list, g) => (
              <ToolGroup key={g} $end={row.end}>
                <Grip />
                <Tools list={list} />
              </ToolGroup>
            ))}
          </ToolRow>
        ))}

        <Body>
          <SidePanel>
            <PanelHeader>Páginas - Tren de lavado</PanelHeader>
            <PagesPanel>
              <FieldLabel htmlFor="filter"><Key text="Filtro:" at={0} /></FieldLabel>
              <FilterRow>
                <SelectBox>
                  <Select id="filter" defaultValue="s"><option value="s">Selección</option></Select>
                  <SelectArrow><Chevron dir={0} /></SelectArrow>
                </SelectBox>
                <DotsButton type="button">...</DotsButton>
                <CheckLabel><Check type="checkbox" /><span><Key text="Activo" at={0} /></span></CheckLabel>
              </FilterRow>
              <LoneCheck><Check type="checkbox" aria-label="Filtro rápido" $round /></LoneCheck>
              <Tree>
                {treeRows.map((row) => (
                  <TreeRow key={row.text} $depth={row.depth}>
                    {row.open ? <Expander /> : <Elbow />}
                    <svg width="16" height="16" viewBox="0 0 16 16" aria-hidden="true">{treeArt[row.art]}</svg>
                    <TreeText $active={row.active}>{row.text}</TreeText>
                  </TreeRow>
                ))}
              </Tree>
            </PagesPanel>
            <Tabs>
              <Tab type="button" $active>Arbol</Tab>
              <Tab type="button">Lista</Tab>
            </Tabs>
            <PreviewWrap>
              <PanelHeader>Previsualización gráfica</PanelHeader>
              <PreviewBox><FusePreview /></PreviewBox>
            </PreviewWrap>
          </SidePanel>

          <Rail $w={29}>
            <Grip $across />
            <Tools list={drawTools} across />
          </Rail>

          <Editor>
            <Sheet>
              <Schematic />
              <ScrollBar $v>
                <ScrollButton $v type="button" aria-label="Arriba"><Chevron dir={180} /></ScrollButton>
                <Track $size={197} />
                <Thumb $v $size={280} />
                <ScrollButton $v type="button" aria-label="Abajo"><Chevron dir={0} /></ScrollButton>
              </ScrollBar>
              <ScrollBar>
                <ScrollButton type="button" aria-label="Izquierda"><Chevron dir={90} /></ScrollButton>
                <Thumb $size={725}><ThumbGrip /></Thumb>
                <Track $size={197} />
                <ScrollButton type="button" aria-label="Derecha"><Chevron dir={270} /></ScrollButton>
              </ScrollBar>
            </Sheet>
            <SheetTabs>
              <SheetTab type="button"><PageGlyph />=EVG+ESK/1</SheetTab>
            </SheetTabs>
          </Editor>

          <RightDock>
            <Rail $w={26}>
              <Grip $across />
              <Tools list={connectTools} across />
            </Rail>
          </RightDock>
        </Body>

        <StatusBar>
          <span>RX: 50,00</span>
          <span>RY: 48,00</span>
          <span>Elegir posición de destino</span>
          <span>Activar: 4,00 mm</span>
          <span>Lógica 1:1</span>
        </StatusBar>

        <TaskBar>
          <StartButton type="button">
            <svg width="16" height="16" viewBox="0 0 16 16" aria-hidden="true">
              <path d="M2 2Q5 1 7 3L6 8Q4 6 1 7Z" fill="#e2642c" />
              <path d="M8 3Q11 5 15 3L14 8Q10 9 7 8Z" fill="#7cc242" />
              <path d="M1 8Q4 7 6 9L5 14Q3 12 0 13Z" fill="#4d8fe8" />
              <path d="M7 9Q10 10 14 9L13 14Q9 15 6 14Z" fill="#f3cb3c" />
            </svg>
            Inicio
          </StartButton>
          <TaskButton type="button"><AppIcon />EPLAN Education Ver...</TaskButton>
          <Lang>ES</Lang>
          <Tray>
            <TrayButton type="button" aria-label="Mostrar iconos"><Chevron dir={90} c="#fff" /></TrayButton>
            <svg width="13" height="13" viewBox="0 0 13 13" aria-hidden="true">
              <rect width="13" height="13" rx="1" fill="#6d6d70" />
              <T x="1" y="9" c="#fff" z="8">vm</T>
            </svg>
            <Clock>16:36</Clock>
          </Tray>
        </TaskBar>
        <TopStrip />
      </Desktop>
    </>
  );
}
